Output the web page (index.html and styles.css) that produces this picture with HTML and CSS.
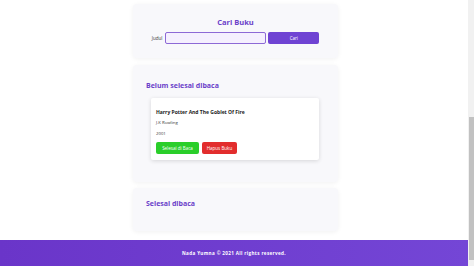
FILE: index.html
```html
<!DOCTYPE html>
<html lang="id">
<head>
    <meta charset="UTF-8">
    <meta name="viewport" content="width=device-width, initial-scale=1.0">
    <title>Bookshelf Apps</title>
    <link rel="stylesheet" href="styles.css">
</head>
<body>
    <div class="page">
        <main class="main">
            <section class="card search-section">
                <h2>Cari Buku</h2>
                <form id="searchBook" class="search-row">
                    <label for="searchBookTitle">Judul</label>
                    <input type="text" id="searchBookTitle">
                    <button type="submit" class="btn-purple">Cari</button>
                </form>
            </section>

            <section class="card shelf">
                <h2>Belum selesai dibaca</h2>
                <div id="incompleteBookshelfList">
                    <article class="book-item">
                        <h3>Harry Potter And The Goblet Of Fire</h3>
                        <p>J.K Rowling</p>
                        <p>2001</p>
                        <div class="action">
                            <button class="green">Selesai di Baca</button>
                            <button class="red">Hapus Buku</button>
                        </div>
                    </article>
                </div>
            </section>

            <section class="card shelf shelf-empty">
                <h2>Selesai dibaca</h2>
                <div id="completeBookshelfList"></div>
            </section>
        </main>

        <footer class="footer">
            <p>Nada Yumna &copy; 2021 All rights reserved.</p>
        </footer>
    </div>

    <!-- batang gulir seperti pada tangkapan layar -->
    <div class="scrollbar" aria-hidden="true">
        <div class="thumb"></div>
    </div>
</body>
</html>
```

FILE: styles.css
```css
html, body {
    height: 100%;
}
body {
    margin: 0;
    display: flex;
    font-family: 'Open Sans', 'Liberation Sans', sans-serif;
    background-color: #fff;
    color: #222;
}
.page {
    flex: 1;
    display: flex;
    flex-direction: column;
    padding-top: 4px;
}
.scrollbar {
    width: 6px;
    background: #f1f1f1;
}
.scrollbar .thumb {
    margin: 117px 0 0 1px;
    height: 143px;
    background: #c1c1c1;
}
.main {
    width: 205px;
    margin: 0 auto;
    padding-left: 3px;
    display: flex;
    flex-direction: column;
}
.card {
    background: #f8f8fb;
    border-radius: 4px;
    box-shadow: 0 1px 5px rgba(0, 0, 0, 0.06);
    padding: 14px 13px;
}
.card h2 {
    margin: 0;
    font-size: 7px;
    line-height: 9px;
    font-weight: 700;
    color: #6b3fc9;
}
input {
    box-sizing: border-box;
    background: #f5f0fe;
    border: 1px solid #8d69d6;
    border-radius: 2px;
    padding: 0 3px;
    font-family: inherit;
    font-size: 5px;
    outline: none;
}
button {
    font-family: inherit;
    border: none;
    cursor: pointer;
}
.btn-purple {
    background-color: #6f43d3;
    color: #fff;
    border-radius: 2px;
    font-size: 4.5px;
}
.search-section h2 {
    text-align: center;
    font-size: 7.5px;
}
.search-row {
    display: flex;
    justify-content: center;
    align-items: center;
    margin-top: 5px;
}
.search-row label {
    font-size: 4.5px;
    color: #333;
    margin-right: 3px;
}
.search-row input {
    width: 101px;
    height: 12px;
}
.search-row button {
    width: 51px;
    height: 12px;
    margin-left: 2px;
}
.shelf {
    margin-top: 7px;
    padding: 16px 13px 22px;
}
.shelf-empty {
    margin-top: 6px;
    padding: 11px 13px 23px;
}
.book-item {
    background: #fff;
    margin: 8px 6px 0 5px;
    padding: 5px 5px 6px;
    border-radius: 2px;
    box-shadow: 0 1px 4px rgba(0, 0, 0, 0.14);
}
.book-item h3 {
    margin: 6px 0 3px;
    font-size: 5px;
    line-height: 7px;
    font-weight: 700;
}
.book-item p {
    margin: 0 0 3.5px;
    font-size: 4.3px;
    line-height: 7px;
    color: #333;
}
.action {
    display: flex;
    gap: 3px;
    margin-top: 5px;
}
.action button {
    height: 12px;
    padding: 0 3px;
    border-radius: 2px;
    font-size: 4.5px;
    color: #fff;
}
.action .green {
    background-color: #2ace2a;
    width: 43px;
}
.action .red {
    background-color: #e22d2d;
    width: 35px;
}
.footer {
    margin-top: auto;
    height: 26px;
    display: flex;
    align-items: center;
    justify-content: center;
    background: linear-gradient(90deg, #6a35c9, #7446d6);
}
.footer p {
    margin: 0;
    color: #fff;
    font-size: 4.6px;
    font-weight: 700;
    letter-spacing: 0.35px;
}
```
